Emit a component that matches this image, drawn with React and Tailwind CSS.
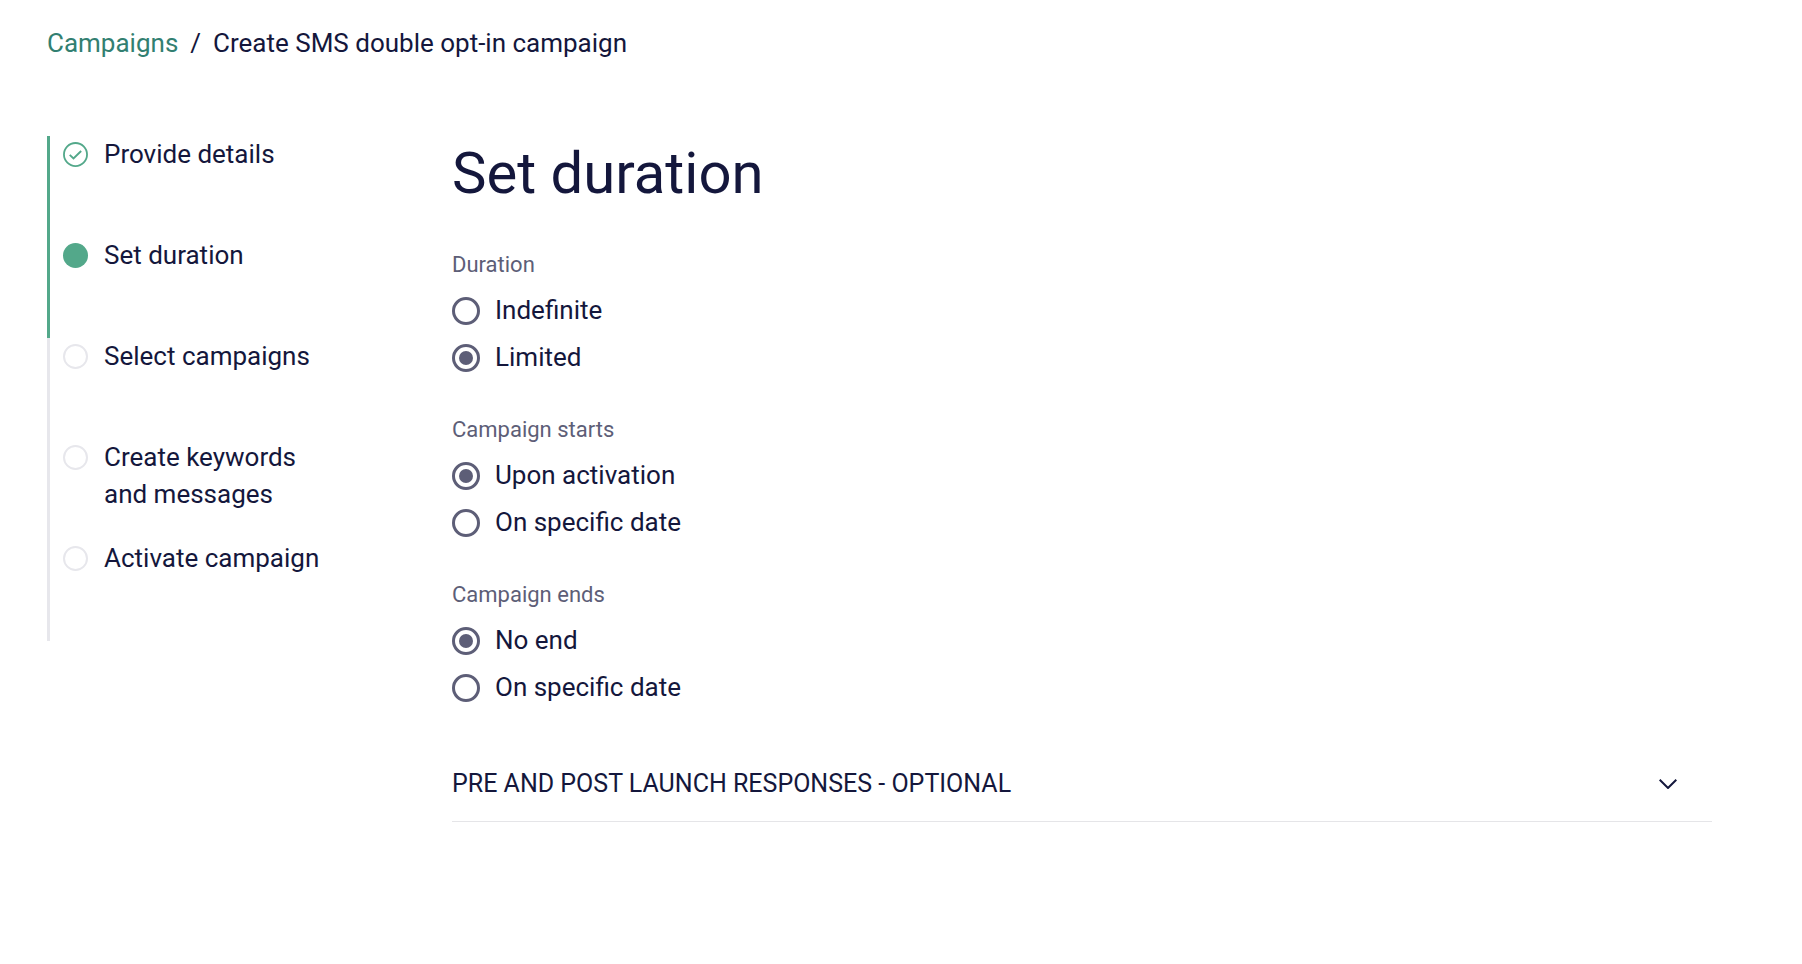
import { useState } from "react";

const steps = [
  { label: "Provide details", status: "done" },
  { label: "Set duration", status: "current" },
  { label: "Select campaigns", status: "todo" },
  { label: "Create keywords and messages", status: "todo" },
  { label: "Activate campaign", status: "todo" },
];

const groups = [
  { name: "duration", label: "Duration", options: ["Indefinite", "Limited"], initial: "Limited" },
  { name: "starts", label: "Campaign starts", options: ["Upon activation", "On specific date"], initial: "Upon activation" },
  { name: "ends", label: "Campaign ends", options: ["No end", "On specific date"], initial: "No end" },
];

function StepIcon({ status }) {
  if (status === "done") {
    return (
      <svg className="w-[25px] h-[25px]" viewBox="0 0 26 26" fill="none" stroke="#53a88a" strokeWidth="1.9">
        <circle cx="13" cy="13" r="12" />
        <path d="M7 13.4l3.9 3.6 8-7.6" strokeWidth="2" />
      </svg>
    );
  }
  if (status === "current") {
    return <span className="block w-[25px] h-[25px] rounded-full bg-[#53a88a]" />;
  }
  return <span className="block w-[25px] h-[25px] rounded-full border-2 border-[#e7e7ec]" />;
}

function Steps() {
  return (
    <ol className="w-[405px] shrink-0">
      {steps.map((step) => (
        <li
          key={step.label}
          className={`flex h-[101px] gap-4 border-l-3 pl-[13px] ${step.status === "todo" ? "border-[#e7e7ec]" : "border-[#53a88a]"}`}
          aria-current={step.status === "current" ? "step" : undefined}
        >
          <div className="flex h-9 items-center">
            <StepIcon status={step.status} />
          </div>
          <span className="w-[230px] leading-[37px]">{step.label}</span>
        </li>
      ))}
    </ol>
  );
}

function RadioGroup({ name, label, options, initial }) {
  const [value, setValue] = useState(initial);

  return (
    <fieldset>
      <legend className="pb-2 text-[22px] leading-7 text-[#5d5e77]">{label}</legend>
      {options.map((option) => (
        <label key={option} className="flex h-[47px] w-fit cursor-pointer items-center gap-[15px]">
          <input
            type="radio"
            name={name}
            checked={value === option}
            onChange={() => setValue(option)}
            className="grid w-7 h-7 appearance-none place-content-center rounded-full border-3 border-[#5d5e77] before:h-[14px] before:w-[14px] before:rounded-full before:content-[''] checked:before:bg-[#5d5e77]"
          />
          {option}
        </label>
      ))}
    </fieldset>
  );
}

function App() {
  const [open, setOpen] = useState(false);

  return (
    <div className="min-h-screen bg-white pt-6 pr-[90px] pl-[47px] font-['Roboto','Liberation_Sans',sans-serif] text-[26px] text-[#14173c]">
      <nav aria-label="Breadcrumb" className="flex gap-3 leading-[38px]">
        <a href="#campaigns" className="text-[#327f71]">Campaigns</a>
        <span>/</span>
        <span>Create SMS double opt-in campaign</span>
      </nav>

      <div className="flex pt-[74px]">
        <Steps />

        <main className="min-w-0 flex-1">
          <h1 className="text-[58px] leading-[74px]">Set duration</h1>

          <form className="flex flex-col gap-[35px] pt-[41px]">
            {groups.map((group) => (
              <RadioGroup key={group.name} {...group} />
            ))}
          </form>

          <button
            type="button"
            aria-expanded={open}
            onClick={() => setOpen(!open)}
            className="mt-9 flex h-[75px] w-full cursor-pointer items-center justify-between border-b border-[#e5e5e8] pr-[35px] text-left text-[25px]"
          >
            PRE AND POST LAUNCH RESPONSES - OPTIONAL
            <svg className="w-[18px] h-[10px]" viewBox="0 0 18 10" fill="none" stroke="#14173c" strokeWidth="2">
              <path d="M0.7 0.7L9 9l8.3-8.3" />
            </svg>
          </button>
        </main>
      </div>
    </div>
  );
}

export default App;
